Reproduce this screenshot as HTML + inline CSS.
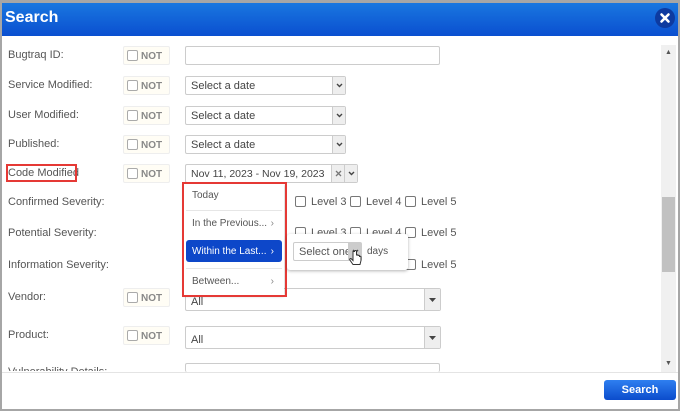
<!DOCTYPE html>
<html><head><style>
*{box-sizing:border-box;margin:0;padding:0}
body{width:680px;height:411px;overflow:hidden;background:#fff;font-family:"Liberation Sans",sans-serif;position:relative;color:#555}
.a{position:absolute}
.frame{left:0;top:0;width:680px;height:411px;border:2px solid #a6a6a6;border-top:3px solid #a6a6a6}
.hdr{left:2px;top:2px;width:676px;height:34px;background:linear-gradient(#1a78e0,#0a4fd0);}
.lbl{font-size:11px;color:#555;left:8px}
.not{left:123px;width:47px;height:19px;border:1px solid #eee;background:#fffdf5;border-radius:2px;font-size:10px;color:#888;font-weight:bold;padding:3px 0 0 3px}
.not i{display:inline-block;width:11px;height:11px;border:1px solid #aaa;border-radius:2px;vertical-align:-2px;margin-right:3px;background:#fff}
.inp{border:1px solid #ccc;border-radius:2px;background:#fff;font-size:11px;color:#444;padding:3px 0 0 5px;white-space:nowrap}
.arr{position:absolute;right:0;top:0;bottom:0;width:13px;border-left:1px solid #ccc;background:#eee;display:flex;align-items:center;justify-content:center}
.cb{font-size:11px;color:#555}
.cb i{display:inline-block;width:11px;height:11px;border:1px solid #777;border-radius:2px;vertical-align:-2px;margin-right:5px;background:#fff}
.mi{left:186px;width:96px;font-size:10px;color:#555;padding-left:6px}
.mi b{position:absolute;right:8px;font-weight:normal;color:#888}
</style></head><body>
<div class="a hdr"></div>
<div class="a" style="left:5px;top:9px;font-size:16px;font-weight:bold;color:#fff">Search</div>
<div class="a" style="left:655px;top:8px;width:20px;height:20px;border-radius:50%;background:#0d3aa0;"><svg width="20" height="20"><path d="M6.5 6.5L13.5 13.5M13.5 6.5L6.5 13.5" stroke="#fff" stroke-width="2.6" stroke-linecap="round"/></svg></div>

<div class="a lbl" style="top:49px">Bugtraq ID:</div>
<div class="a not" style="top:46px"><i></i>NOT</div>
<div class="a inp" style="left:185px;top:46px;width:255px;height:19px"></div>

<div class="a lbl" style="top:79px">Service Modified:</div>
<div class="a not" style="top:76px"><i></i>NOT</div>
<div class="a inp" style="left:185px;top:76px;width:161px;height:19px">Select a date<span class="arr"><svg width="7" height="5"><path d="M1 1L3.5 3.5L6 1" stroke="#444" stroke-width="1.4" fill="none"/></svg></span></div>

<div class="a lbl" style="top:109px">User Modified:</div>
<div class="a not" style="top:106px"><i></i>NOT</div>
<div class="a inp" style="left:185px;top:106px;width:161px;height:19px">Select a date<span class="arr"><svg width="7" height="5"><path d="M1 1L3.5 3.5L6 1" stroke="#444" stroke-width="1.4" fill="none"/></svg></span></div>

<div class="a lbl" style="top:138px">Published:</div>
<div class="a not" style="top:135px"><i></i>NOT</div>
<div class="a inp" style="left:185px;top:135px;width:161px;height:19px">Select a date<span class="arr"><svg width="7" height="5"><path d="M1 1L3.5 3.5L6 1" stroke="#444" stroke-width="1.4" fill="none"/></svg></span></div>

<div class="a lbl" style="top:167px">Code Modified</div>
<div class="a" style="left:6px;top:164px;width:71px;height:18px;border:2px solid #e53935"></div>
<div class="a not" style="top:164px"><i></i>NOT</div>
<div class="a inp" style="left:185px;top:164px;width:173px;height:19px;font-size:10.5px">Nov 11, 2023 - Nov 19, 2023<span class="arr" style="right:13px"><svg width="7" height="7"><path d="M1 1L6 6M6 1L1 6" stroke="#777" stroke-width="1.3"/></svg></span><span class="arr"><svg width="7" height="5"><path d="M1 1L3.5 3.5L6 1" stroke="#444" stroke-width="1.4" fill="none"/></svg></span></div>

<div class="a lbl" style="top:196px">Confirmed Severity:</div>
<div class="a lbl" style="top:227px">Potential Severity:</div>
<div class="a lbl" style="top:259px">Information Severity:</div>

<div class="a cb" style="left:295px;top:196px"><i></i>Level 3</div>
<div class="a cb" style="left:350px;top:196px"><i></i>Level 4</div>
<div class="a cb" style="left:405px;top:196px"><i></i>Level 5</div>
<div class="a cb" style="left:295px;top:227px"><i></i>Level 3</div>
<div class="a cb" style="left:350px;top:227px"><i></i>Level 4</div>
<div class="a cb" style="left:405px;top:227px"><i></i>Level 5</div>
<div class="a cb" style="left:405px;top:259px"><i></i>Level 5</div>

<div class="a lbl" style="top:291px">Vendor:</div>
<div class="a not" style="top:288px"><i></i>NOT</div>
<div class="a inp" style="left:185px;top:288px;width:256px;height:23px;padding-top:7px">All<span class="arr" style="width:16px"><svg width="7" height="4"><path d="M0 0H7L3.5 4Z" fill="#444"/></svg></span></div>

<div class="a lbl" style="top:329px">Product:</div>
<div class="a not" style="top:326px"><i></i>NOT</div>
<div class="a inp" style="left:185px;top:326px;width:256px;height:23px;padding-top:7px">All<span class="arr" style="width:16px"><svg width="7" height="4"><path d="M0 0H7L3.5 4Z" fill="#444"/></svg></span></div>

<div class="a lbl" style="top:366px;height:5px;overflow:hidden">Vulnerability Details:</div>
<div class="a inp" style="left:185px;top:363px;width:255px;height:9px;border-bottom:none"></div>

<!-- scrollbar -->
<div class="a" style="left:661px;top:45px;width:15px;height:327px;background:#f0f0f0"></div>
<div class="a" style="left:662px;top:197px;width:13px;height:75px;background:#c1c1c1"></div>
<div class="a" style="left:665px;top:49px;font-size:7px;color:#555">▲</div>
<div class="a" style="left:665px;top:360px;font-size:7px;color:#555">▼</div>
<div class="a" style="left:2px;top:372px;width:676px;height:1px;background:#e4e4e4"></div>
<div class="a" style="left:604px;top:380px;width:72px;height:20px;border-radius:3px;background:linear-gradient(#2f7ff0,#0b4ccc);color:#fff;font-size:11px;font-weight:bold;text-align:center;line-height:20px">Search</div>

<!-- dropdown menu -->
<div class="a" style="left:184px;top:184px;width:100px;height:111px;background:#fff;box-shadow:0 1px 3px rgba(0,0,0,.3)"></div>
<div class="a mi" style="top:190px">Today</div>
<div class="a" style="left:186px;top:210px;width:96px;height:1px;background:#e6e6e6"></div>
<div class="a mi" style="top:218px">In the Previous...<b>›</b></div>
<div class="a" style="left:186px;top:240px;width:96px;height:22px;background:#0d47c9;border-radius:3px"></div>
<div class="a mi" style="top:246px;color:#fff">Within the Last...<b style="color:#fff">›</b></div>
<div class="a" style="left:186px;top:268px;width:96px;height:1px;background:#e6e6e6"></div>
<div class="a mi" style="top:276px">Between...<b>›</b></div>
<div class="a" style="left:182px;top:182px;width:105px;height:115px;border:2px solid #e53935"></div>

<!-- popup -->
<div class="a" style="left:287px;top:234px;width:121px;height:36px;background:#fff;border-radius:3px;box-shadow:0 1px 3px rgba(0,0,0,.3)"></div>
<div class="a inp" style="left:293px;top:242px;width:69px;height:19px;color:#555">Select one<span class="arr" style="background:#ccc"><svg width="7" height="5"><path d="M1 1L3.5 3.5L6 1" stroke="#444" stroke-width="1.4" fill="none"/></svg></span></div>
<div class="a" style="left:367px;top:246px;font-size:10px;color:#555">days</div>
<svg class="a" style="left:349px;top:250px" width="14" height="17"><path d="M4 1.5v9l-1.5-1.5c-1-1-2.5 0-1.5 1.2l3 4.3h7l1-4v-3.5c0-1-1.5-1-1.5 0v-1c0-1-1.5-1-1.5 0v-.5c0-1-1.5-1-1.5 0v-4c0-1.3-2-1.3-2 0z" fill="#fff" stroke="#333" stroke-width="1"/></svg>

<div class="a frame"></div>
</body></html>
